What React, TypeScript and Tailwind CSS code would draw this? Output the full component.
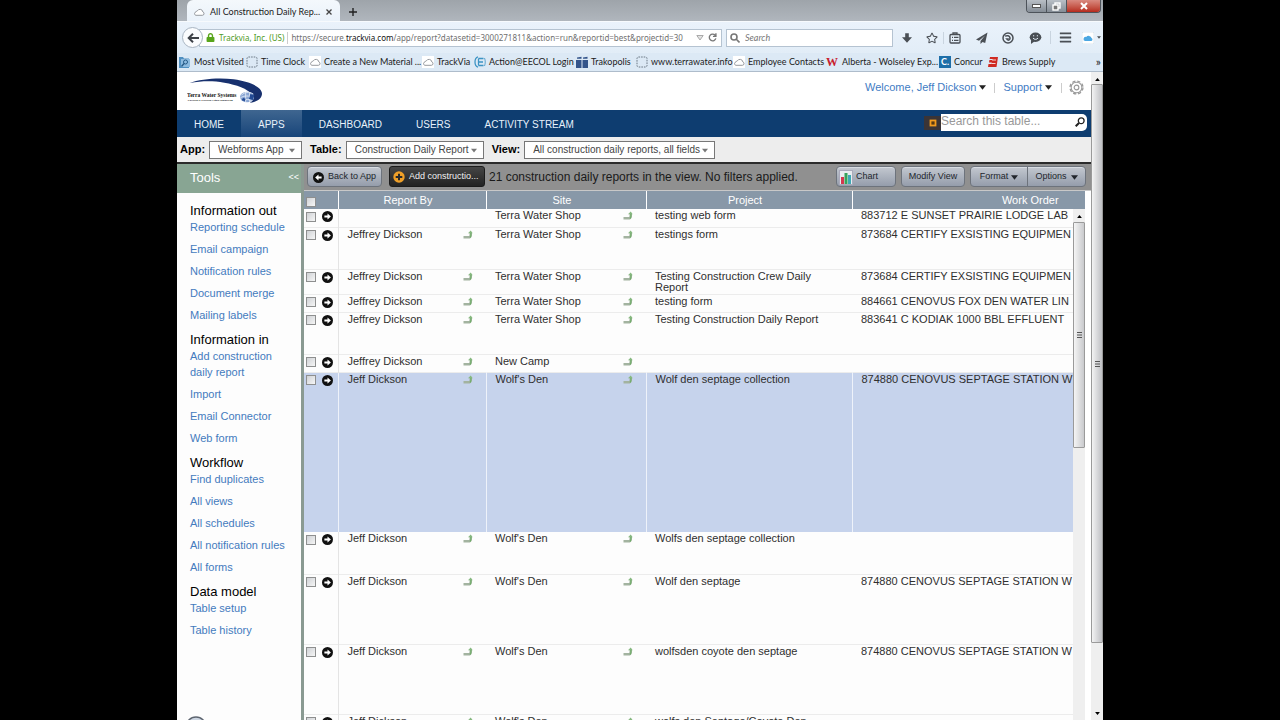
import type { ReactNode } from "react";
import { FaLock, FaRegStar, FaBars } from "react-icons/fa";

function Cloud({ className = "" }: { className?: string }) {
  return (
    <svg viewBox="0 0 12 12" className={"size-3 shrink-0 " + className} fill="#fff" stroke="#8b8f94" strokeWidth="0.9">
      <path d="M2.8 9.3h6.6a1.7 1.7 0 0 0 .5-3.3A3 3 0 0 0 4.3 4.9 1.7 1.7 0 0 0 2.9 6 1.7 1.7 0 0 0 2.8 9.3z" />
    </svg>
  );
}

function Dashed() {
  return (
    <svg viewBox="0 0 12 12" className="size-3 shrink-0" fill="none" stroke="#5f6b78" strokeWidth="0.9" strokeDasharray="1.6 1">
      <rect x="1" y="1" width="10" height="10" rx="1.5" />
    </svg>
  );
}

function Caret({ className = "" }: { className?: string }) {
  return (
    <svg viewBox="0 0 8 5" className={"w-[7px] h-[5px] shrink-0 " + className} fill="currentColor">
      <path d="M0 0h8L4 5z" />
    </svg>
  );
}

function CircleArrow({ left = false }: { left?: boolean }) {
  return (
    <svg viewBox="0 0 12 12" className="size-[11px] shrink-0">
      <circle cx="6" cy="6" r="6" fill="#111" />
      <path
        d={left ? "M2.3 6 6 2.6v2.3h3.4v2.2H6v2.3z" : "M9.7 6 6 2.6v2.3H2.6v2.2H6v2.3z"}
        fill="#fff"
      />
    </svg>
  );
}

function LinkArrow() {
  return (
    <svg viewBox="0 0 10 9" className="w-[10px] h-[9px] shrink-0">
      <path d="M.5 7.300h4.800c1.800 0 2.400-.9 2.400-2.400V2.500" fill="none" stroke="#a3b3a0" strokeWidth="2.400" />
      <path d="M5 3.300 7.700.5l2 2.800z" fill="#86b87f" />
      <path d="M7.900 3v2.200c0 1-.3 1.700-1 2.200" fill="none" stroke="#6fae68" strokeWidth="1.200" />
    </svg>
  );
}

function Grip() {
  return (
    <svg viewBox="0 0 5 6" className="w-[5px] h-[6px]" stroke="#555" strokeWidth="1">
      <path d="M0 .5h5M0 3h5M0 5.5h5" />
    </svg>
  );
}

function Logo() {
  return (
    <svg viewBox="0 0 228 78" className="w-[76px] h-[26px]" role="img" aria-label="Terra Water Systems">
      <path d="M8 15C40 3 95-2 140 4c50 7 86 24 85 44-1 14-14 23-37 27 12-7 15-16 8-25-14-18-48-30-84-36C75 8 45 9 8 15z" fill="#17306e" />
      <ellipse cx="180" cy="57" rx="21" ry="16" fill="#8aa6d4" />
      <path d="M163 52c8-10 24-12 36-4M160 60c10-8 28-8 40 0M168 68c8-5 18-5 26 0M176 42v30M188 43v29" stroke="#e4ecf7" strokeWidth="2.5" fill="none" />
      <path d="M190 48l12 4-4 14-12-3zM168 60l8 2-3 8-9-3z" fill="#234a94" />
      <text x="0" y="58" fontFamily="Liberation Serif, serif" fontWeight="700" fontSize="16.5" fill="#141414">Terra Water Systems</text>
      <text x="2" y="70" fontFamily="Liberation Serif, serif" fontWeight="700" fontSize="7.6" fill="#222">a division of Precision Liquid Engineering</text>
    </svg>
  );
}

const bookmarks: { label: string; width: string; icon: ReactNode }[] = [
  {
    label: "Most Visited",
    width: "w-[67px]",
    icon: (
      <svg viewBox="0 0 12 12" className="size-3 shrink-0">
        <path d="M0 1h4l1 1.5h5V12H0z" fill="#4f8fc0" />
        <path d="M2 3h9v8H2z" fill="#8dbbe0" />
        <circle cx="6.5" cy="6" r="2" fill="none" stroke="#245985" />
        <path d="m5 7.5-2.5 3" stroke="#245985" strokeWidth="1.3" />
      </svg>
    ),
  },
  { label: "Time Clock", width: "w-[63px]", icon: <Dashed /> },
  { label: "Create a New Material ...", width: "w-[113px]", icon: <Cloud className="bg-white" /> },
  { label: "TrackVia", width: "w-[52px]", icon: <Cloud className="bg-white" /> },
  {
    label: "Action@EECOL Login",
    width: "w-[102px]",
    icon: (
      <svg viewBox="0 0 12 12" className="size-3 shrink-0" fill="none" stroke="#3d94c4" strokeWidth="1.3">
        <path d="M4 .8C0 2 0 10 4 11.200M4.500 2.500h5M4 6h5M4.500 9.500h5M4.500 2.500v7" />
        <path d="M10.500 2c1 2.500 1 5.500 0 8" strokeWidth="0.8" />
      </svg>
    ),
  },
  {
    label: "Trakopolis",
    width: "w-[60px]",
    icon: (
      <svg viewBox="0 0 12 12" className="size-3 shrink-0" fill="#34558b">
        <path d="M0 4h5.500v8H0zM6.500 4H12v8H6.500zM1 1.500l4.500-.7v2H1zM7 1.500l4.500-.7v2H7z" />
      </svg>
    ),
  },
  { label: "www.terrawater.info", width: "w-[97px]", icon: <Dashed /> },
  { label: "Employee Contacts", width: "w-[93px]", icon: <Cloud className="bg-white" /> },
  {
    label: "Alberta - Wolseley Exp...",
    width: "w-[113px]",
    icon: <span className="w-[13px] shrink-0 font-['Liberation_Serif',serif] text-[12px] leading-3 font-bold text-[#c8202c]">W</span>,
  },
  {
    label: "Concur",
    width: "w-[48px]",
    icon: (
      <span className="grid size-3 shrink-0 place-items-center bg-[#1d6ea8] text-[9px] leading-3 font-bold text-white">C.</span>
    ),
  },
  {
    label: "Brews Supply",
    width: "w-[68px]",
    icon: (
      <svg viewBox="0 0 12 12" className="size-3 shrink-0">
        <path d="M3 1h8L9.500 11H1l.5-3h3l.3-1.500H2L2.400 4h3l.2-1H2.600z" fill="#cf2a22" />
        <path d="M5 4h4M4.500 7.500h4" stroke="#fff" strokeWidth="0.8" />
      </svg>
    ),
  },
];

const tools: { title: string; links: string[] }[] = [
  { title: "Information out", links: ["Reporting schedule", "Email campaign", "Notification rules", "Document merge", "Mailing labels"] },
  { title: "Information in", links: ["Add construction daily report", "Import", "Email Connector", "Web form"] },
  { title: "Workflow", links: ["Find duplicates", "All views", "All schedules", "All notification rules", "All forms"] },
  { title: "Data model", links: ["Table setup", "Table history"] },
];

type Row = { by: string; site: string; project: string; order: string; height: string; selected?: boolean };

const rows: Row[] = [
  { by: "", site: "Terra Water Shop", project: "testing web form", order: "883712 E SUNSET PRAIRIE LODGE LAB", height: "h-[18px]" },
  { by: "Jeffrey Dickson", site: "Terra Water Shop", project: "testings form", order: "873684 CERTIFY EXSISTING EQUIPMEN", height: "h-[42px]" },
  { by: "Jeffrey Dickson", site: "Terra Water Shop", project: "Testing Construction Crew Daily Report", order: "873684 CERTIFY EXSISTING EQUIPMEN", height: "h-[25px]" },
  { by: "Jeffrey Dickson", site: "Terra Water Shop", project: "testing form", order: "884661 CENOVUS FOX DEN WATER LIN", height: "h-[18px]" },
  { by: "Jeffrey Dickson", site: "Terra Water Shop", project: "Testing Construction Daily Report", order: "883641 C KODIAK 1000 BBL EFFLUENT", height: "h-[42px]" },
  { by: "Jeffrey Dickson", site: "New Camp", project: "", order: "", height: "h-[18px]" },
  { by: "Jeff Dickson", site: "Wolf's Den", project: "Wolf den septage collection", order: "874880 CENOVUS SEPTAGE STATION W", height: "h-[160px]", selected: true },
  { by: "Jeff Dickson", site: "Wolf's Den", project: "Wolfs den septage collection", order: "", height: "h-[42px]" },
  { by: "Jeff Dickson", site: "Wolf's Den", project: "Wolf den septage", order: "874880 CENOVUS SEPTAGE STATION W", height: "h-[70px]" },
  { by: "Jeff Dickson", site: "Wolf's Den", project: "wolfsden coyote den septage", order: "874880 CENOVUS SEPTAGE STATION W", height: "h-[70px]" },
  { by: "Jeff Dickson", site: "Wolf's Den", project: "wolfs den Septage/Coyote Den", order: "", height: "h-[42px]" },
];

const box =
  "block size-[10px] shrink-0 appearance-none border border-[#8e8f8f] bg-gradient-to-br from-[#cfd2d5] to-[#f6f6f6]";

const grayButton =
  "flex h-[21px] items-center justify-center border border-[#6d737c] bg-gradient-to-b from-[#c3c8d0] to-[#959dab] pt-px text-[9px] text-[#22262c] shadow-[inset_0_1px_0_#d9dde3]";

function BrowserChrome() {
  return (
    <header className="font-['Lato','Open_Sans',sans-serif] text-[#1b1b1b]">
      <div className="flex h-[21px] bg-gradient-to-b from-[#9ea4aa] to-[#b0b6bd]">
        <div className="ml-[10px] flex w-[153px] items-center gap-[5px] rounded-t-md bg-gradient-to-b from-[#f4f8fc] to-[#eaf2fa] px-[6px] pt-[2px] text-[9px]">
          <Cloud />
          <span className="flex-1 whitespace-nowrap">All Construction Daily Rep...</span>
          <button aria-label="Close tab" className="mr-[2px] text-[#444]">
            <svg viewBox="0 0 6 6" className="size-[6px]" stroke="currentColor" strokeWidth="1.3"><path d="m.5.5 5 5m0-5-5 5" /></svg>
          </button>
        </div>
        <button aria-label="New tab" className="ml-[9px] pt-[2px] text-[#222]">
          <svg viewBox="0 0 8 8" className="size-2" stroke="currentColor" strokeWidth="1.4"><path d="M4 0v8M0 4h8" /></svg>
        </button>
        <div className="mr-[2px] ml-auto flex h-[13px] overflow-hidden rounded-b border border-t-0 border-[#4d535a]">
          <button aria-label="Minimise" className="grid w-5 place-items-center border-r border-[#4d535a] bg-gradient-to-b from-[#b9bfc6] to-[#858d96]">
            <svg viewBox="0 0 9 4" className="h-1 w-[9px]"><rect x=".5" y=".5" width="8" height="3" fill="#fff" stroke="#555" /></svg>
          </button>
          <button aria-label="Restore" className="grid w-5 place-items-center border-r border-[#4d535a] bg-gradient-to-b from-[#b9bfc6] to-[#858d96]">
            <svg viewBox="0 0 9 9" className="size-[9px]" fill="none" stroke="#fff" strokeWidth="1.400"><rect x="3" y="1" width="5" height="5" /><rect x="1" y="3" width="5" height="5" fill="#777" /></svg>
          </button>
          <button aria-label="Close" className="grid w-[33px] place-items-center bg-gradient-to-b from-[#d98a80] to-[#b5291c]">
            <svg viewBox="0 0 8 8" className="size-2" stroke="#fff" strokeWidth="2"><path d="m1 1 6 6m0-6L1 7" /></svg>
          </button>
        </div>
      </div>

      <div className="flex h-[32px] items-center border-t border-[#f7fafd] bg-gradient-to-b from-[#eaf2fb] to-[#e2edf7] pl-[5px]">
        <button aria-label="Back" className="z-10 grid size-[21px] shrink-0 place-items-center rounded-full border border-[#a9b5c2] bg-[#fafcfe]">
          <svg viewBox="0 0 12 10" className="h-[10px] w-3" fill="none" stroke="#3d4248" strokeWidth="2"><path d="M6 .7 1.700 5 6 9.300M2 5h10" /></svg>
        </button>
        <div className="-ml-1 flex h-[18px] w-[523px] items-center border border-[#b5c3d1] bg-white pl-[6px] font-['Noto_Sans','Open_Sans',sans-serif] text-[8px]">
          <FaLock className="size-[9px] shrink-0 text-[#58a51b]" />
          <span className="ml-[4px] shrink-0 text-[#4d9a1c]">Trackvia, Inc. (US)</span>
          <span className="mx-[3px] h-3 w-px shrink-0 bg-[#ccc]" />
          <span className="min-w-0 flex-1 overflow-hidden whitespace-nowrap text-[#6f6f6f]">
            https://secure.<span className="text-[#111]">trackvia.com</span>/app/report?datasetid=3000271811&amp;action=run&amp;reportid=best&amp;projectid=30
          </span>
          <svg viewBox="0 0 8 6" className="ml-[3px] h-[6px] w-2 shrink-0" fill="#e3e3e3" stroke="#aaa"><path d="M.8.5h6.400L4 5z" /></svg>
          <svg viewBox="0 0 10 10" className="mx-[4px] size-[9px] shrink-0" fill="none" stroke="#777" strokeWidth="1.500"><path d="M8 2.600A3.700 3.700 0 1 0 8.700 6M8.800.4v3.300H5.500" /></svg>
        </div>
        <label className="ml-1 flex h-[18px] w-[167px] items-center gap-[5px] border border-[#b5c3d1] bg-white pl-[3px]">
          <svg viewBox="0 0 10 10" className="size-[10px] shrink-0" fill="none" stroke="#777" strokeWidth="1.600"><circle cx="4" cy="4" r="3" /><path d="m6.300 6.300 3.200 3.200" /></svg>
          <input aria-label="Search the web" placeholder="Search" className="w-full min-w-0 text-[9px] italic outline-none placeholder:text-[#777]" />
        </label>
        <div className="ml-auto flex items-center text-[#4a4f55]">
          <button aria-label="Downloads" className="mr-[14px]">
            <svg viewBox="0 0 10 10" className="size-[10px]" fill="currentColor"><path d="M3.200.3h3.600v4H10L5 9.700 0 4.300h3.200z" /></svg>
          </button>
          <button aria-label="Bookmark" className="mr-[5px]"><FaRegStar className="size-3" /></button>
          <button aria-label="Bookmarks list" className="mr-[15px] border-l border-[#c9d4df] pl-[5px]">
            <svg viewBox="0 0 12 12" className="size-3" fill="none" stroke="currentColor" strokeWidth="1.300"><rect x="1" y="2.500" width="10" height="8.500" rx="1" /><path d="M4 2.500V1h4v1.500M3 5.300h1M5 5.300h4.500M3 8.300h1M5 8.300h4.500" /></svg>
          </button>
          <button aria-label="Share" className="mr-[14px]">
            <svg viewBox="0 0 12 12" className="size-[12px]" fill="currentColor"><path d="M11.500.5 0 7.500l3 1.200L9 3.500 4.500 9v3l2-2 2.700 1z" /></svg>
          </button>
          <button aria-label="Sync" className="mr-[15px]">
            <svg viewBox="0 0 12 12" className="size-3" fill="none" stroke="currentColor"><circle cx="6" cy="6" r="5" strokeWidth="1.500" /><path d="M3 4.200c2-1 4.600-.6 5 1.600.2 1.400-.8 2.400-2.200 2.400" strokeWidth="1.500" /><path d="M3.200 6.200h4L5.400 8.800z" fill="currentColor" stroke="none" /></svg>
          </button>
          <button aria-label="Chat" className="mr-2">
            <svg viewBox="0 0 13 12" className="h-3 w-[13px]"><ellipse cx="6.500" cy="5.300" rx="5.800" ry="4.700" fill="currentColor" /><path d="M2 8v4l4-3z" fill="currentColor" /><path d="M4 6c1 1.800 4 1.800 5 0M4 3.800h1.200M7.800 3.800H9" stroke="#e6eff8" fill="none" /></svg>
          </button>
          <button aria-label="Menu" className="mr-[10px] border-l border-[#c9d4df] pl-2"><FaBars className="size-[13px]" /></button>
          <button aria-label="Cloud drive" className="flex items-center gap-[3px] pr-[2px]">
            <svg viewBox="0 0 12 12" className="size-3"><rect width="12" height="12" rx="1.500" fill="#fff" stroke="#c9d6e2" strokeWidth=".6" /><path d="M3 9h6a1.500 1.500 0 0 0 .5-2.900A3 3 0 0 0 4.200 5 2 2 0 0 0 3 9z" fill="#4ba7e2" /></svg>
            <Caret className="!h-[3px] !w-1" />
          </button>
        </div>
      </div>

      <nav aria-label="Bookmarks" className="flex h-[19px] items-center border-b border-[#aebccb] bg-[#dce9f5] pl-[2px] text-[9px]">
        {bookmarks.map((b) => (
          <a key={b.label} href="#" className={"flex shrink-0 items-center gap-[3px] whitespace-nowrap " + b.width}>
            {b.icon}
            {b.label}
          </a>
        ))}
        <button aria-label="More bookmarks" className="mr-[2px] ml-auto text-[12px] leading-3">»</button>
      </nav>
    </header>
  );
}

function Picker({ label, value, width }: { label: string; value: string; width: string }) {
  return (
    <label className="flex items-center gap-1 text-[11px] font-bold text-black">
      {label}:
      <span className={"relative block " + width}>
        <select className="block h-[18px] w-full appearance-none border border-[#777] bg-white pl-2 text-[10px] font-normal text-[#444] outline-none">
          <option>{value}</option>
        </select>
        <Caret className="absolute top-[7px] right-[7px] !w-[6px] text-[#777]" />
      </span>
    </label>
  );
}

function Sidebar() {
  return (
    <aside className="relative w-[127px] shrink-0 border-r-[3px] border-[#8a9a92] bg-[#fdfdfd]">
      <div className="flex h-[29px] items-center justify-between bg-[#88a593] pr-[2px] pb-[2px] pl-[13px] text-white">
        <h2 className="text-[13px]">Tools</h2>
        <button aria-label="Collapse tools" className="text-[9px]">&lt;&lt;</button>
      </div>
      <div className="flex flex-col gap-[9px] pt-[10px] pr-3 pl-[13px]">
        {tools.map((group) => (
          <section key={group.title}>
            <h3 className="text-[13px] leading-4 text-black">{group.title}</h3>
            <ul className="flex flex-col gap-[6px] text-[11px] leading-4 text-[#447bbd]">
              {group.links.map((link) => (
                <li key={link}><a href="#">{link}</a></li>
              ))}
            </ul>
          </section>
        ))}
      </div>
      <svg viewBox="0 0 22 22" className="absolute -bottom-[18px] left-2 size-[22px]"><circle cx="11" cy="11" r="10" fill="#cdd6e2" stroke="#5d6570" strokeWidth="1.500" /></svg>
    </aside>
  );
}

function ReportTable() {
  return (
    <div className="relative mr-[6px] flex-1 overflow-hidden bg-[#fdfdfd]">
      <table className="w-[904px] table-fixed border-collapse text-left text-[11px] leading-[11px] text-[#2f2f2f]">
        <colgroup>
          <col className="w-[34px]" />
          <col className="w-[148px]" />
          <col className="w-[160px]" />
          <col className="w-[206px]" />
          <col className="w-[356px]" />
        </colgroup>
        <thead>
          <tr className="h-[18px] bg-[#8898a8] text-white">
            <th className="pt-[3px] pl-[2px] font-normal"><input type="checkbox" aria-label="Select all reports" className={box} /></th>
            {["Report By", "Site", "Project", "Work Order"].map((h) => (
              <th key={h} className="border-l border-white pr-2 text-center font-normal last:pr-0">{h}</th>
            ))}
          </tr>
        </thead>
        <tbody>
          {rows.map((r, i) => {
            const line = r.selected ? "border-l border-[#eef2fa]" : "";
            return (
              <tr key={i} className={r.height + " align-top " + (r.selected ? "bg-[#c6d3ec]" : "border-b border-[#ececec]")}>
                <td className="pt-[2px] pl-[2px]">
                  <div className="flex items-center gap-[6px]">
                    <input type="checkbox" aria-label={"Select report " + (i + 1)} className={box} />
                    <button aria-label={"Open report " + (i + 1)}><CircleArrow /></button>
                  </div>
                </td>
                <td className={"border-l pt-px pr-[13px] pl-[9px] " + (r.selected ? "border-[#eef2fa]" : "border-[#e4e4e4]")}>
                  {r.by && <div className="flex items-center justify-between">{r.by}<LinkArrow /></div>}
                </td>
                <td className={"pt-px pr-[13px] pl-[9px] " + line}>
                  <div className="flex items-center justify-between">{r.site}<LinkArrow /></div>
                </td>
                <td className={"pt-px pr-[9px] pl-[9px] " + line}>{r.project}</td>
                <td className={"pt-px pl-[9px] whitespace-nowrap " + line}>{r.order}</td>
              </tr>
            );
          })}
        </tbody>
      </table>
      <div aria-hidden="true" className="absolute top-[18px] right-0 bottom-0 w-3 bg-[#efefef]">
        <Caret className="mx-auto mt-[6px] mb-[2px] !h-[3px] !w-[5px] rotate-180" />
        <div className="mt-1 grid h-[226px] place-items-center rounded-[1px] border border-[#9a9a9a] bg-gradient-to-r from-[#f5f5f5] to-[#c9cacd]"><Grip /></div>
      </div>
    </div>
  );
}

export default function App() {
  return (
    <div className="flex h-screen flex-col overflow-hidden bg-black px-[177px] font-['Liberation_Sans',Arial,sans-serif]">
      <BrowserChrome />
      <div className="flex min-h-0 flex-1 bg-white">
        <main className="flex min-w-0 flex-1 flex-col">
          <div className="flex h-[38px] shrink-0 justify-between pl-[10px]">
            <div className="pt-[6px]"><Logo /></div>
            <div className="flex h-[31px] items-center pr-[7px] text-[11px] text-[#3f7cc4]">
              <button className="flex items-center gap-[3px]">Welcome, Jeff Dickson <Caret className="text-[#222]" /></button>
              <span className="mx-[8px] h-[10px] w-px bg-[#ccc]" />
              <button className="flex items-center gap-[3px]">Support <Caret className="text-[#222]" /></button>
              <span className="mr-[7px] ml-[9px] h-[10px] w-px bg-[#ccc]" />
              <button aria-label="Settings">
                <svg viewBox="0 0 16 16" className="size-[15px]" fill="none" stroke="#999">
                  <circle cx="8" cy="8" r="6.900" strokeWidth="1.400" strokeDasharray="3.400 2.020" />
                  <circle cx="8" cy="8" r="5.700" strokeWidth="1.100" />
                  <circle cx="8" cy="8" r="2.500" strokeWidth="1.200" />
                </svg>
              </button>
            </div>
          </div>

          <nav className="flex h-[27px] shrink-0 items-center bg-[#0e3d70] text-[10px] text-[#e8f1fa]">
            {["HOME", "APPS", "DASHBOARD", "USERS", "ACTIVITY STREAM"].map((n) => (
              <a
                key={n}
                href="#"
                className={"flex h-full items-center px-[17px] pt-[2px] " + (n === "APPS" ? "bg-gradient-to-b from-[#3f6690] to-[#17457a]" : "")}
              >
                {n}
              </a>
            ))}
            <form className="mr-1 ml-auto flex items-center pb-[2px]">
              <span className="grid h-[14px] w-[17px] place-items-center bg-[#3a3436]">
                <svg viewBox="0 0 8 8" className="size-2"><rect x="1.500" y="1.500" width="5" height="5" fill="#5a3a10" stroke="#f19a1e" strokeWidth="1.800" /></svg>
              </span>
              <label className="flex h-[17px] w-[146px] items-start rounded-r-[5px] bg-white">
                <input aria-label="Search this table" placeholder="Search this table..." className="h-[14px] w-full min-w-0 text-[12px] text-black outline-none placeholder:text-[#999]" />
                <svg viewBox="0 0 10 10" className="mt-[3px] mr-[2px] size-[10px] shrink-0" fill="none" stroke="#222" strokeWidth="1.300"><circle cx="6.200" cy="3.800" r="2.900" /><path d="M4 6 .7 9.300" strokeWidth="2" /></svg>
              </label>
            </form>
          </nav>

          <div className="flex h-[27px] shrink-0 items-center gap-2 border-b-2 border-[#2b2b2b] bg-[#ededed] pl-[3px]">
            <Picker label="App" value="Webforms App" width="w-[93px]" />
            <Picker label="Table" value="Construction Daily Report" width="w-[138px]" />
            <Picker label="View" value="All construction daily reports, all fields" width="w-[191px]" />
          </div>

          <div className="flex min-h-0 flex-1">
            <Sidebar />
            <section className="flex min-w-0 flex-1 flex-col">
              <div className="flex h-[27px] shrink-0 items-center border-b border-[#c8c8c8] bg-[#909090] pr-[5px] pb-px pl-[3px]">
                <button className={grayButton + " w-[75px] gap-1 rounded"}><CircleArrow left />Back to App</button>
                <button className="ml-[7px] flex h-[21px] w-[96px] items-center gap-1 rounded-[3px] border border-[#1b1b1b] bg-gradient-to-b from-[#454545] to-[#232323] pt-px pl-[3px] text-[9px] whitespace-nowrap text-[#f1f1f1]">
                  <svg viewBox="0 0 12 12" className="size-3 shrink-0"><circle cx="6" cy="6" r="5.700" fill="#f0a028" /><path d="M6 2.700v6.600M2.700 6h6.600" stroke="#2a2a2a" strokeWidth="2" /></svg>
                  Add constructio...
                </button>
                <p className="ml-1 text-[12px] whitespace-nowrap text-[#1a1a1a]">21 construction daily reports in the view. No filters applied.</p>
                <div className="ml-auto flex">
                  <button className={grayButton + " w-[60px] !justify-start gap-[3px] rounded pl-[2px]"}>
                    <svg viewBox="0 0 14 15" className="h-[15px] w-[14px]"><rect x=".5" y=".5" width="13" height="14" fill="#e9ecef" stroke="#aab" /><rect x="2" y="7" width="3" height="7" fill="#d4374f" /><rect x="5.500" y="3" width="3" height="11" fill="#37a35a" /><rect x="9" y="5" width="3" height="9" fill="#3fa9b5" /></svg>
                    Chart
                  </button>
                  <button className={grayButton + " ml-[5px] w-[64px] rounded"}>Modify View</button>
                  <button className={grayButton + " ml-[5px] w-[58px] gap-[3px] rounded-l"}>Format <Caret /></button>
                  <button className={grayButton + " -ml-px w-[59px] gap-[4px] rounded-r"}>Options <Caret /></button>
                </div>
              </div>
              <div className="flex min-h-0 flex-1"><ReportTable /></div>
            </section>
          </div>
        </main>

        <div aria-hidden="true" className="flex w-3 shrink-0 flex-col items-center bg-[#efefef]">
          <Caret className="mt-[6px] mb-[3px] !h-[3px] !w-[5px] rotate-180" />
          <div className="grid h-[559px] w-full place-items-center rounded-[1px] border border-[#9a9a9a] bg-gradient-to-r from-[#f3f3f3] to-[#bfc0c4]"><Grip /></div>
          <Caret className="mt-auto mb-[5px] !h-[3px] !w-[5px]" />
        </div>
      </div>
    </div>
  );
}
